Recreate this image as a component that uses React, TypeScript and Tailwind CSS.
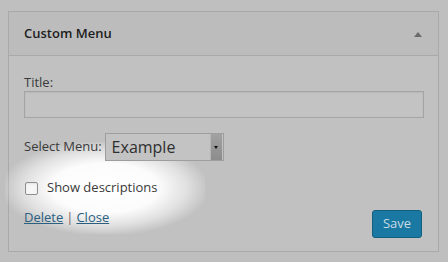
export default function App() {
  return (
    <div className="relative w-[448px] h-[262px] overflow-hidden bg-[#bfbfbf] pt-[11px] pl-[8px] font-['Open_Sans',sans-serif]">
      <div className="w-[431px] h-[241px] border border-[#a9a9a9] bg-[#c1c1c1] flex flex-col">
        {/* header */}
        <div className="h-[44px] shrink-0 flex items-center justify-between pl-[15px] pr-[15px] bg-[#bcbcbc] border-b border-[#a9a9a9]">
          <span className="text-[13px] font-semibold text-[#1e1e1e]">Custom Menu</span>
          <span className="w-0 h-0 border-l-[4px] border-r-[4px] border-b-[5px] border-l-transparent border-r-transparent border-b-[#6a6a6a] mr-[1px] mt-[1px]" />
        </div>

        {/* body */}
        <div className="relative flex-1 px-[15px] pt-[17px]">
          <div className="absolute left-[-4px] top-[86px] w-[200px] h-[92px] pointer-events-none bg-[radial-gradient(ellipse_at_center,rgba(255,255,255,1)_0%,rgba(255,255,255,0.95)_38%,rgba(255,255,255,0.5)_58%,rgba(255,255,255,0)_74%)]" />

          <div className="relative text-[13px] leading-[18px] text-[#3a3a3a]">Title:</div>
          <div className="relative w-[400px] h-[27px] border border-[#a4a4a4] bg-[#c3c3c3] shadow-[inset_0_1px_2px_rgba(0,0,0,0.06)]" />

          <div className="relative flex items-center mt-[15px] h-[28px]">
            <span className="text-[13px] text-[#3a3a3a] mr-[3px]">Select Menu:</span>
            <div className="w-[119px] h-[28px] border border-[#9e9e9e] bg-[#c3c3c3] flex items-center">
              <span className="flex-1 pl-[6px] text-[16px] text-[#2f2f2f]">Example</span>
              <span className="w-[12px] h-[26px] mr-[1px] bg-[linear-gradient(to_bottom,#a2a2a2,#8c8c8c)] border-l border-[#b5b5b5] flex items-center justify-center">
                <span className="w-0 h-0 border-l-[2.5px] border-r-[2.5px] border-t-[3px] border-l-transparent border-r-transparent border-t-[#111]" />
              </span>
            </div>
          </div>

          <div className="relative flex items-center mt-[20px] h-[14px]">
            <span className="w-[13px] h-[13px] rounded-[2px] border border-[#8f8f8f] bg-[#f6f6f6] ml-[1px] shadow-[inset_0_1px_2px_rgba(0,0,0,0.08)]" />
            <span className="ml-[9px] text-[13px] text-[#3a3a3a]">Show descriptions</span>
          </div>

          <div className="relative flex items-start justify-between mt-[13px]">
            <div className="text-[13px] leading-[18px] text-[#2a5f80] flex items-center gap-[3px]">
              <span className="underline">Delete</span>
              <span className="text-[#7a5c5c]">|</span>
              <span className="underline">Close</span>
            </div>
            <div className="w-[50px] h-[28px] mt-[2px] mr-[1px] rounded-[3px] bg-[#1a79a2] border border-[#135f80] flex items-center justify-center text-[13px] text-[#c6dbe5]">
              Save
            </div>
          </div>
        </div>
      </div>
    </div>
  );
}
